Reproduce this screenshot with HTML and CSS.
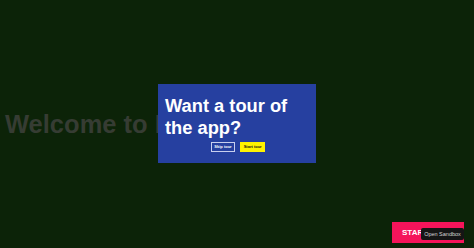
FILE: index.html
```html
<!DOCTYPE html>
<html lang="en">
<head>
<meta charset="utf-8">
<title>Tour</title>
<link rel="stylesheet" href="styles.css">
</head>
<body>
<main class="page">
  <h1 class="welcome">Welcome to React</h1>
</main>
<div class="modal" role="dialog">
  <h2 class="modal-title">Want a tour of the app?</h2>
  <div class="modal-actions">
    <button class="btn btn-skip">Skip tour</button>
    <button class="btn btn-start">Start tour</button>
  </div>
</div>
<button class="start-fab">START TOUR</button>
<a class="sandbox-link">Open Sandbox</a>
</body>
</html>
```
FILE: styles.css
```css
html, body {
  margin: 0;
  padding: 0;
  width: 474px;
  height: 248px;
  overflow: hidden;
  background: #0c2308;
  font-family: "Liberation Sans", Arial, sans-serif;
}

.page {
  height: 248px;
  display: flex;
  align-items: center;
  padding-left: 5px;
  box-sizing: border-box;
}

.welcome {
  margin: 0;
  margin-top: 1px;
  font-size: 25.5px;
  font-weight: bold;
  color: #363c33;
  white-space: nowrap;
}

.modal {
  position: absolute;
  left: 158px;
  top: 84px;
  width: 158px;
  height: 79px;
  box-sizing: border-box;
  background: #2640a0;
  padding: 11px 7px 0 7px;
  display: flex;
  flex-direction: column;
}

.modal-title {
  margin: 0;
  font-size: 18.3px;
  line-height: 22px;
  font-weight: bold;
  color: #ffffff;
}

.modal-actions {
  margin-top: 3px;
  display: flex;
  justify-content: center;
  gap: 5px;
  padding-left: 2px;
}

.btn {
  height: 10px;
  padding: 0 2.5px;
  margin: 0;
  font-family: "Liberation Sans", Arial, sans-serif;
  font-size: 4px;
  font-weight: bold;
  line-height: 8px;
  white-space: nowrap;
  cursor: pointer;
}

.btn-skip {
  background: transparent;
  color: #ffffff;
  border: 1px solid #c8cfee;
}

.btn-start {
  background: #fff200;
  color: #111111;
  border: 1px solid #fff200;
}

.start-fab {
  position: fixed;
  left: 392px;
  top: 222px;
  width: 72px;
  height: 21px;
  padding: 0 0 0 10px;
  border: none;
  background: #f5145a;
  color: #ffffff;
  font-family: "Liberation Sans", Arial, sans-serif;
  font-size: 8px;
  font-weight: bold;
  text-align: left;
  overflow: hidden;
  white-space: nowrap;
}

.sandbox-link {
  position: fixed;
  left: 421px;
  top: 228px;
  width: 43px;
  height: 12px;
  box-sizing: border-box;
  background: #151515;
  border-radius: 2px;
  color: #d6d6d6;
  font-size: 5.5px;
  line-height: 12px;
  text-align: center;
  white-space: nowrap;
}
```
